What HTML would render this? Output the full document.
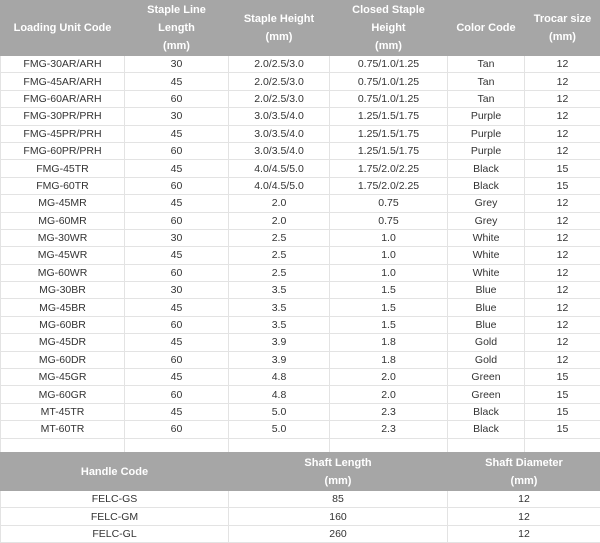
<!DOCTYPE html>
<html><head><style>
body{margin:0;background:#fff;font-family:"Liberation Sans",sans-serif;}
table{border-collapse:collapse;table-layout:fixed;position:absolute;left:0;width:600px;}
td,th{border:1px solid #e3e3e3;text-align:center;padding:0;font-size:10.5px;color:#333;overflow:hidden;white-space:nowrap;}
th{background:#a6a6a6;color:#fff;font-weight:bold;font-size:11px;line-height:18px;border-color:#a6a6a6;}
tr.d td{height:16.4px;line-height:16px;}
</style></head><body>
<table style="top:0">
<colgroup><col style="width:124px"><col style="width:104px"><col style="width:101px"><col style="width:118px"><col style="width:77px"><col style="width:76px"></colgroup>
<tr style="height:52px"><th>Loading Unit Code</th><th>Staple Line<br>Length<br>(mm)</th><th>Staple Height<br>(mm)</th><th>Closed Staple<br>Height<br>(mm)</th><th>Color Code</th><th>Trocar size<br>(mm)</th></tr>
<tr class="d"><td>FMG-30AR/ARH</td><td>30</td><td>2.0/2.5/3.0</td><td>0.75/1.0/1.25</td><td>Tan</td><td>12</td></tr>
<tr class="d"><td>FMG-45AR/ARH</td><td>45</td><td>2.0/2.5/3.0</td><td>0.75/1.0/1.25</td><td>Tan</td><td>12</td></tr>
<tr class="d"><td>FMG-60AR/ARH</td><td>60</td><td>2.0/2.5/3.0</td><td>0.75/1.0/1.25</td><td>Tan</td><td>12</td></tr>
<tr class="d"><td>FMG-30PR/PRH</td><td>30</td><td>3.0/3.5/4.0</td><td>1.25/1.5/1.75</td><td>Purple</td><td>12</td></tr>
<tr class="d"><td>FMG-45PR/PRH</td><td>45</td><td>3.0/3.5/4.0</td><td>1.25/1.5/1.75</td><td>Purple</td><td>12</td></tr>
<tr class="d"><td>FMG-60PR/PRH</td><td>60</td><td>3.0/3.5/4.0</td><td>1.25/1.5/1.75</td><td>Purple</td><td>12</td></tr>
<tr class="d"><td>FMG-45TR</td><td>45</td><td>4.0/4.5/5.0</td><td>1.75/2.0/2.25</td><td>Black</td><td>15</td></tr>
<tr class="d"><td>FMG-60TR</td><td>60</td><td>4.0/4.5/5.0</td><td>1.75/2.0/2.25</td><td>Black</td><td>15</td></tr>
<tr class="d"><td>MG-45MR</td><td>45</td><td>2.0</td><td>0.75</td><td>Grey</td><td>12</td></tr>
<tr class="d"><td>MG-60MR</td><td>60</td><td>2.0</td><td>0.75</td><td>Grey</td><td>12</td></tr>
<tr class="d"><td>MG-30WR</td><td>30</td><td>2.5</td><td>1.0</td><td>White</td><td>12</td></tr>
<tr class="d"><td>MG-45WR</td><td>45</td><td>2.5</td><td>1.0</td><td>White</td><td>12</td></tr>
<tr class="d"><td>MG-60WR</td><td>60</td><td>2.5</td><td>1.0</td><td>White</td><td>12</td></tr>
<tr class="d"><td>MG-30BR</td><td>30</td><td>3.5</td><td>1.5</td><td>Blue</td><td>12</td></tr>
<tr class="d"><td>MG-45BR</td><td>45</td><td>3.5</td><td>1.5</td><td>Blue</td><td>12</td></tr>
<tr class="d"><td>MG-60BR</td><td>60</td><td>3.5</td><td>1.5</td><td>Blue</td><td>12</td></tr>
<tr class="d"><td>MG-45DR</td><td>45</td><td>3.9</td><td>1.8</td><td>Gold</td><td>12</td></tr>
<tr class="d"><td>MG-60DR</td><td>60</td><td>3.9</td><td>1.8</td><td>Gold</td><td>12</td></tr>
<tr class="d"><td>MG-45GR</td><td>45</td><td>4.8</td><td>2.0</td><td>Green</td><td>15</td></tr>
<tr class="d"><td>MG-60GR</td><td>60</td><td>4.8</td><td>2.0</td><td>Green</td><td>15</td></tr>
<tr class="d"><td>MT-45TR</td><td>45</td><td>5.0</td><td>2.3</td><td>Black</td><td>15</td></tr>
<tr class="d"><td>MT-60TR</td><td>60</td><td>5.0</td><td>2.3</td><td>Black</td><td>15</td></tr>
<tr class="d"><td></td><td></td><td></td><td></td><td></td><td></td></tr>
</table>
<table style="top:452px">
<colgroup><col style="width:228px"><col style="width:219px"><col style="width:153px"></colgroup>
<tr style="height:38px"><th>Handle Code</th><th>Shaft Length<br>(mm)</th><th>Shaft Diameter<br>(mm)</th></tr>
<tr class="d"><td>FELC-GS</td><td>85</td><td>12</td></tr>
<tr class="d"><td>FELC-GM</td><td>160</td><td>12</td></tr>
<tr class="d"><td>FELC-GL</td><td>260</td><td>12</td></tr>
</table>
</body></html>
